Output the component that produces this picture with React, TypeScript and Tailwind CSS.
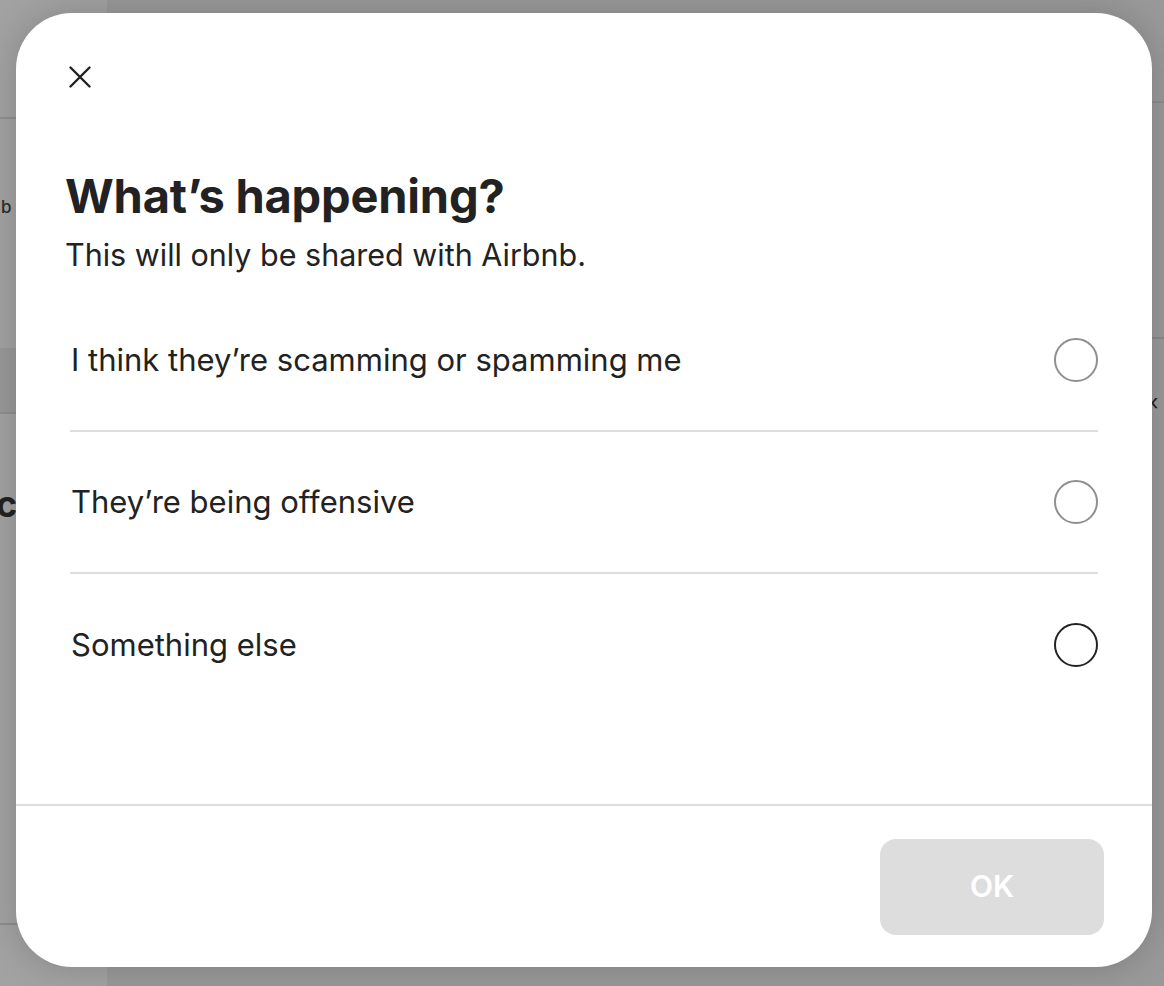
const reasons = [
  { label: 'I think they’re scamming or spamming me', hovered: false },
  { label: 'They’re being offensive', hovered: false },
  { label: 'Something else', hovered: true },
];

function CloseIcon() {
  return (
    <svg width="22" height="22" viewBox="0 0 22 22" fill="none" stroke="#222222" strokeWidth="2.4" strokeLinecap="round">
      <path d="M1.5 1.5l19 19M20.5 1.5l-19 19" />
    </svg>
  );
}

function PageBehind() {
  return (
    <div className="flex h-full w-full">
      <div className="w-[107px] h-full bg-[#a2a2a2] flex flex-col">
        <div className="h-[119px] border-b-2 border-[#8f8f8f]" />
        <div className="h-[229px] pt-[80px] pl-[1px] text-[17px] font-medium text-[#2b2b2b] leading-none">b</div>
        <div className="h-[66px] bg-[#989898] border-b-2 border-[#8e8e8e]" />
        <div className="h-[509px] pt-[72px] text-[36px] font-bold text-[#222222] leading-none -ml-[4px]">c</div>
        <div className="border-t-2 border-[#8c8c8c]" />
      </div>
      <div className="flex-1 h-full bg-[#999999] flex flex-col items-end">
        <div className="w-[40px] h-[103px] border-b-2 border-[#8c8c8c]" />
        <div className="w-[40px] h-[236px] border-b-2 border-[#8a8a8a]" />
        <div className="w-[14px] pt-[52px] text-[22px] text-[#222222] leading-none">‹</div>
      </div>
    </div>
  );
}

export default function App() {
  return (
    <div className="relative w-[1164px] h-[986px] overflow-hidden bg-[#999999] font-['Inter','Noto_Sans',sans-serif]">
      <PageBehind />
      <div className="absolute inset-0 pl-[16px] pt-[13px]">
        <div className="w-[1136px] h-[954px] bg-white rounded-[56px] shadow-[0_0_36px_rgba(0,0,0,0.18)] flex flex-col">
          <div className="flex-1 flex flex-col">
            <div className="pt-[53px] pl-[53px]">
              <button className="block w-[22px] h-[22px]"><CloseIcon /></button>
            </div>
            <div className="px-[49px] mt-[80px]">
              <h1 className="text-[47px] leading-[56px] font-bold text-[#222222] tracking-[-0.2px]">What’s happening?</h1>
              <p className="mt-[12px] text-[30.5px] leading-[38px] text-[#222222]">This will only be shared with Airbnb.</p>
            </div>
            <div className="mt-[16px] px-[54px]">
              {reasons.map((r, i) => (
                <div
                  key={r.label}
                  className={`h-[142px] flex items-center justify-between ${i < reasons.length - 1 ? 'border-b-2 border-[#dddddd]' : ''}`}
                >
                  <span className="pl-[1px] text-[31px] text-[#222222]">{r.label}</span>
                  <span className={`w-[44px] h-[44px] rounded-full border-2 ${r.hovered ? 'border-[#222222]' : 'border-[#8f8f8f]'}`} />
                </div>
              ))}
            </div>
          </div>
          <div className="h-[163px] border-t-2 border-[#dddddd] px-[48px] flex items-center justify-end">
            <button className="w-[224px] h-[96px] rounded-[16px] bg-[#dddddd] text-white text-[30px] font-semibold">OK</button>
          </div>
        </div>
      </div>
    </div>
  );
}
